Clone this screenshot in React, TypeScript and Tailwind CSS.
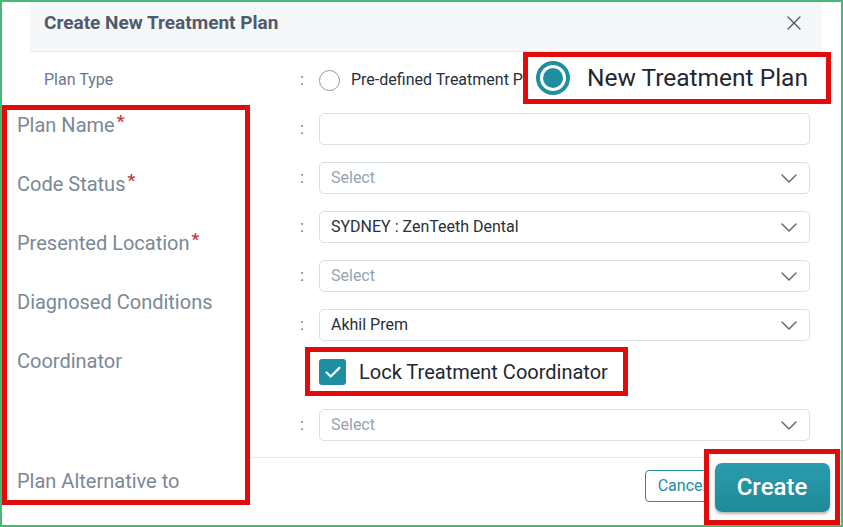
import { X } from 'lucide-react'

const ROWS: { label: string; required?: boolean; kind: 'input' | 'select'; value?: string }[] = [
  { label: 'Plan Name', required: true, kind: 'input' },
  { label: 'Code Status', required: true, kind: 'select' },
  { label: 'Presented Location', required: true, kind: 'select', value: 'SYDNEY : ZenTeeth Dental' },
  { label: 'Diagnosed Conditions', kind: 'select' },
  { label: 'Coordinator', kind: 'select', value: 'Akhil Prem' },
]

function Chevron() {
  return (
    <svg width="16" height="9" viewBox="0 0 16 9" fill="none" className="shrink-0">
      <path d="M1 1l7 7 7-7" stroke="#626d7b" strokeWidth="1.5" strokeLinecap="round" strokeLinejoin="round" />
    </svg>
  )
}

function Check({ size }: { size: number }) {
  return (
    <svg width={size} height={size} viewBox="0 0 24 24" fill="none">
      <path d="M5 12.5l4.5 4.5L19 7.5" stroke="white" strokeWidth="2.4" strokeLinecap="round" strokeLinejoin="round" />
    </svg>
  )
}

function Field({ kind, value }: { kind: 'input' | 'select'; value?: string }) {
  return (
    <div className="flex h-[32px] items-center justify-between rounded-[5px] border border-[#d9dfe6] bg-white pl-[11px] pr-[12px]">
      {kind === 'select' && (
        <>
          <span className={value ? 'text-[#27303c]' : 'text-[#97a3b1]'}>{value ?? 'Select'}</span>
          <Chevron />
        </>
      )}
    </div>
  )
}

function Label({ text, required }: { text: string; required?: boolean }) {
  return (
    <span>
      {text}
      {required && <span className="ml-[2px] align-top text-[13px] text-[#c8373d]">*</span>}
    </span>
  )
}

export default function App() {
  return (
    <div className="relative h-[527px] w-[843px] overflow-hidden border-2 border-[#48b878] bg-white [font-family:Roboto,'Noto_Sans',sans-serif] text-[16px]">
      <div className="ml-[28px] w-[792px]">
        <header className="flex h-[50px] items-center justify-between border-b border-[#e4e8ed] bg-[#f6f7f9] pb-[8px] pl-[14px] pr-[16px]">
          <h1 className="text-[19px] leading-[22px] font-bold text-[#4f5b6a]">Create New Treatment Plan</h1>
          <X size={24} strokeWidth={1.3} className="text-[#4b5563]" />
        </header>

        <div className="flex flex-col gap-[17px] pl-[14px] pr-[12px] pt-[12px]">
          <div className="grid h-[32px] grid-cols-[256px_19px_1fr] items-center">
            <span className="text-[#6b7786]">Plan Type</span>
            <span className="text-[#6b7280]">:</span>
            <div className="flex items-center gap-[32px]">
              <label className="flex items-center gap-[11px] whitespace-nowrap text-[#27303c]">
                <span className="h-[21px] w-[21px] rounded-full border-[1.5px] border-[#8b97a4]" />
                Pre-defined Treatment Plan
              </label>
              <label className="flex items-center gap-[11px] whitespace-nowrap text-[#27303c]">
                <span className="flex h-[21px] w-[21px] items-center justify-center rounded-full border-[2px] border-[#1f8ea0]">
                  <span className="h-[11px] w-[11px] rounded-full bg-[#1f8ea0]" />
                </span>
                New Treatment Plan
              </label>
            </div>
          </div>

          {ROWS.map((r) => (
            <div key={r.label} className="grid grid-cols-[256px_19px_1fr] items-center">
              <span className="text-[#7b8896]">
                <Label text={r.label} required={r.required} />
              </span>
              <span className="text-[#6b7280]">:</span>
              <Field kind={r.kind} value={r.value} />
            </div>
          ))}

          <div className="grid h-[34px] grid-cols-[256px_19px_1fr] items-center">
            <span />
            <span />
            <label className="flex items-center gap-[10px] text-[#27303c]">
              <span className="flex h-[18px] w-[18px] items-center justify-center rounded-[3px] bg-[#1f8ea0]">
                <Check size={14} />
              </span>
              Lock Treatment Coordinator
            </label>
          </div>

          <div className="grid grid-cols-[256px_19px_1fr] items-center">
            <span className="text-[#7b8896]">Plan Alternative to</span>
            <span className="text-[#6b7280]">:</span>
            <Field kind="select" />
          </div>
        </div>

        <footer className="mt-[16px] flex justify-end gap-[8px] border-t border-[#e6e9ed] pr-[12px] pt-[12px]">
          <button className="h-[32px] rounded-[4px] border border-[#1f8ea0] px-[12px] text-[#1f8ea0]">Cancel</button>
          <button className="h-[32px] rounded-[4px] bg-[#1f8ea0] px-[18px] text-white">Create</button>
        </footer>
      </div>

      {/* annotation callouts */}
      <div className="absolute left-[521px] top-[50px] flex h-[52px] w-[308px] items-center gap-[17px] border-[5px] border-[#e20a0a] bg-white pl-[8px]">
        <span className="flex h-[34px] w-[34px] items-center justify-center rounded-full border-[4px] border-[#1f8ea0]">
          <span className="h-[20px] w-[20px] rounded-full bg-[#1f8ea0]" />
        </span>
        <span className="text-[24.5px] text-[#1e2732]">New Treatment Plan</span>
      </div>

      <div className="absolute left-0 top-[103px] h-[400px] w-[248px] border-[5px] border-[#e20a0a] bg-white pl-[10px] pt-[3px]">
        <div className="flex flex-col gap-[35px] text-[20px] leading-[24px] text-[#7b8896]">
          {ROWS.map((r) => (
            <span key={r.label}>
              {r.label}
              {r.required && <span className="ml-[2px] align-top text-[17px] font-bold leading-[17px] text-[#c8373d]">*</span>}
            </span>
          ))}
          <span className="mt-[61px]">Plan Alternative to</span>
        </div>
      </div>

      <div className="absolute left-[303px] top-[345px] flex h-[49px] w-[323px] items-center gap-[13px] border-[5px] border-[#e20a0a] bg-white pl-[9px]">
        <span className="flex h-[26px] w-[27px] items-center justify-center rounded-[3px] bg-[#1f8ea0]">
          <Check size={22} />
        </span>
        <span className="text-[20px] text-[#1e2732]">Lock Treatment Coordinator</span>
      </div>

      <div className="absolute left-[702px] top-[447px] flex h-[76px] w-[136px] items-center justify-center border-[5px] border-[#e20a0a] bg-white">
        <button className="h-[49px] w-[115px] rounded-[7px] bg-linear-to-b from-[#2b9cac] to-[#1f8a9a] text-[24px] font-medium text-white shadow-[0_2px_3px_rgba(0,0,0,0.3)]">
          Create
        </button>
      </div>
    </div>
  )
}
